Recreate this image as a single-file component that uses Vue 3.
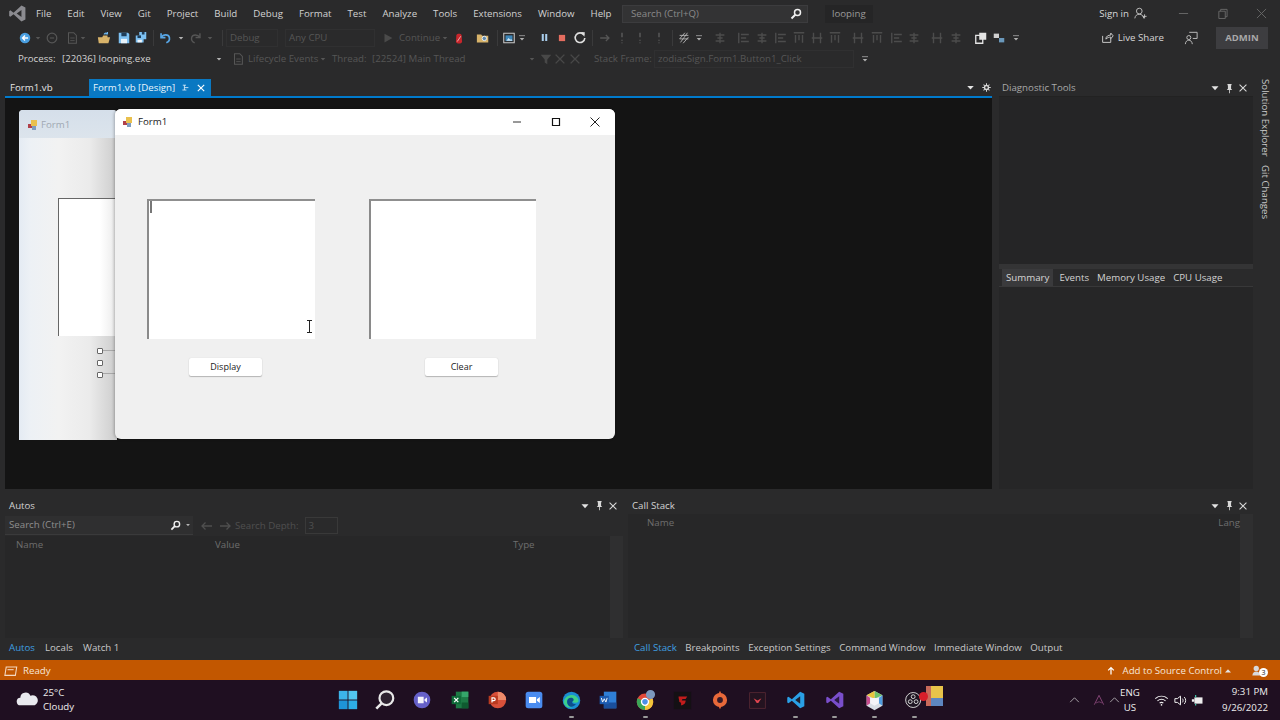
<script setup>
import { h } from 'vue'

const circ = (cx, cy, r) => `M${cx - r} ${cy}a${r} ${r} 0 1 0 ${2 * r} 0a${r} ${r} 0 1 0 ${-2 * r} 0Z`
const DIM = '#565656'

/* every icon: list of [d, fill, stroke, strokeWidth] */
const icons = {
  back: [[circ(8, 8, 6), '#4a9fe0'], ['M11.5 8H5.5M8 5.2L5.2 8 8 10.8', 'none', '#fff', 1.6]],
  fwdDim: [[circ(8, 8, 5.5), 'none', DIM, 1.4], ['M5.5 8h5', 'none', DIM, 1.2]],
  drop: [['M5 6.5h6L8 10z', '#b4b4b4']],
  dropW: [['M4 6h8L8 10.5z', '#e4e4e4']],
  dropDim: [['M5 6.5h6L8 10z', DIM]],
  dropBar: [['M4 4.5h8v1H4z', '#b0b0b0'], ['M5 8h6l-3 3.4z', '#b0b0b0']],
  newDim: [['M4 2h6l3 3v9H4z', 'none', DIM, 1.2], ['M6 8h5M6 11h5', 'none', DIM, 1]],
  open: [['M1 7h5l1-2h5v2h3l-2 7H2z', '#d8b36a'], ['M8 4c1-2 3-2 4-1M12 1v2.5H9.5', 'none', '#6fb7ee', 1.2]],
  save: [['M2 2h10.5L14 3.5V14H2z', '#7cc0f2'], ['M5 2h6v4H5z', '#1f3d59'], ['M4.5 9h7v5h-7z', '#e8f2fa']],
  saveAll: [['M6 1h8v8.5h-3V13H2V5h4z', '#7cc0f2'], ['M4 5h4v3H4z', '#1f3d59'], ['M4 10h5v3H4z', '#f0f6fb'], ['M9 1h3v3H9z', '#1f3d59']],
  undo: [['M3.5 2.5v5h5', 'none', '#58a6e6', 1.9], ['M3.5 7.5C6 3.5 12 3.5 13 7.5c.6 3-1.2 5-3.5 6', 'none', '#58a6e6', 1.9]],
  redoDim: [['M12.5 2.5v5h-5', 'none', DIM, 1.6], ['M12.5 7.5C10 3.5 4 3.5 3 7.5c-.6 3 1.2 5 3.5 6', 'none', DIM, 1.6]],
  playDim: [['M4 3l9 5-9 5z', '#4a4a4a']],
  bug: [['M5 4.5c1-2 5-2 6 0l.5 8c-1 2.5-6 2.5-7 0z', '#c8262c'], ['M6 12l4-6', 'none', '#e8c0c0', 1]],
  folderFind: [['M1 4h5l1 1.5h7V13H1z', '#d8b36a'], [circ(9.5, 8.5, 2.5), '#5f88ad', '#e6eef5', 1.1]],
  frame: [['M2 2.5h12v11H2z', 'none', '#c9c9c9', 1.2], ['M4 5h8v6.5H4z', '#3e86b8'], ['M5 11l2.5-3 2 2 1-1 1.5 2z', '#cfe6f5']],
  pause: [['M4 3h3v10H4zM9 3h3v10H9z', '#a9cdec']],
  stop: [['M3 3h10v10H3z', '#e46d5f']],
  restart: [['M12.5 4.5A5.5 5.5 0 1 0 13.5 8', 'none', '#dedede', 1.8], ['M9 1l4.5 .5-.5 5z', '#dedede']],
  arrowDim: [['M2.5 8h10M9 4.5L12.5 8 9 11.5', 'none', DIM, 1.5]],
  upDim: [['M8 2v5M8 10v1M8 13v1', 'none', DIM, 1.8]],
  hatch: [['M4 13L12 2M3 9l6-7M7 14l6-7M3 5h10M3 9h10', 'none', '#b8b8b8', 1]],
  alignA: [['M2 2v12M4.5 4h9M4.5 8h6M4.5 12h9', 'none', '#4c4c4c', 1.6]],
  alignB: [['M8 2v12M3 4.5h10M5 8h6M3 11.5h10', 'none', '#4c4c4c', 1.6]],
  alignC: [['M2 2h12M4 4.5v9M8 4.5v6M12 4.5v9', 'none', '#4c4c4c', 1.6]],
  alignD: [['M4 2v12M12 2v12M2 8h12', 'none', '#4c4c4c', 1.6]],
  order1: [['M2 5h8v9H2z', 'none', '#e4e4e4', 1.5], ['M6 2h8v8H6z', '#e4e4e4']],
  order2: [['M2 3h6v5H2z', '#cfcfcf'], ['M8 8h6v5H8z', '#6a98bb']],
  share: [['M2 6v8h10V9', 'none', '#c8c8c8', 1.2], ['M6 10c0-3.5 3-5 6-5V2.5L15 6l-3 3.5V7.5c-2 0-4 .5-6 2.5z', 'none', '#c8c8c8', 1.2]],
  feedback: [['M6 1.5h9v7H10', 'none', '#bdbdbd', 1.1], [circ(5.5, 7.5, 2.3), 'none', '#bdbdbd', 1.1], ['M1.5 15c.3-3 2-4.5 4-4.5s3.7 1.5 4 4.5', 'none', '#bdbdbd', 1.1]],
  filterDim: [['M2 3h12L9.5 8.5V14l-3-2V8.5z', '#484848']],
  threadDim: [['M3 3l5 5 5-5M3 13l5-5 5 5', 'none', '#484848', 1.6]],
  search: [[circ(10, 6, 4), 'none', '#f0f0f0', 2], ['M7 9l-5 5', 'none', '#f0f0f0', 2.6]],
  person: [[circ(6.5, 5, 3.5), 'none', '#c8c8c8', 1.1], ['M1 14c.5-3.5 2.5-5 5.5-5s5 1.5 5.5 5', 'none', '#c8c8c8', 1.1], ['M13 9v5M10.5 11.5h5', 'none', '#c8c8c8', 1.1]],
  pin: [['M5 1.5h6V3l-.7.5v5L12 10H4l1.7-1.5v-5L5 3zM7.4 10h1.2v5H7.4z', '#d8d8d8']],
  close: [['M2.5 2.5l11 11M13.5 2.5l-11 11', 'none', '#d8d8d8', 1.7]],
  gear: [[circ(8, 8, 3.5), 'none', '#d8d8d8', 2.4], ['M8 .5v3M8 12.5v3M.5 8h3M12.5 8h3M2.7 2.7l2.2 2.2M11.1 11.1l2.2 2.2M13.3 2.7l-2.2 2.2M4.9 11.1l-2.2 2.2', 'none', '#d8d8d8', 1.8]],
  ready: [['M2.5 3.5h12L13 13H1z', 'none', '#f4d9c2', 1.2], ['M4 6.5h7', 'none', '#f4d9c2', 1.2]],
  up: [['M8 2.5v11M3.5 7L8 2.5 12.5 7', 'none', '#fff', 2]],
  people: [[circ(6, 5, 3), '#d9d9d9'], ['M1.5 13c.3-3 2-4.5 4.5-4.5S10 10 10.5 13z', '#d9d9d9']]
}

/* taskbar icons (24 grid) */
const appIcons = {
  win: [['M2 2h9.5v9.5H2z', '#3cb4ea'], ['M12.5 2H22v9.5h-9.5z', '#52c6f0'], ['M2 12.5h9.5V22H2z', '#1e94d8'], ['M12.5 12.5H22V22h-9.5z', '#2eaee6']],
  find: [[circ(13.5, 10, 7.5), '#2d2230', '#e8e8e8', 2.4], ['M8 16l-5.5 5.5', 'none', '#e8e8e8', 2.8]],
  chat: [[circ(12, 12, 10), '#6560c8'], ['M7 8h7v8H7zM15 11l3-2v6l-3-2z', '#f2f2fb']],
  excel: [['M7 2h15v20H7z', '#1d7a45'], ['M14 2h8v6.5h-8z', '#35a66a'], ['M14 15h8v7h-8z', '#0f5a30'], ['M2 7h11v10H2z', '#0e6b38'], ['M5 9.5l5 5M10 9.5l-5 5', 'none', '#fff', 1.5]],
  ppt: [[circ(13, 12, 10), '#d8503a'], ['M13 2a10 10 0 0 1 10 10H13z', '#ee8a6a'], ['M2 7h11v10H2z', '#b93a20'], ['M6 15V9.5h2.2a1.6 1.6 0 0 1 0 3.3H6', 'none', '#fff', 1.4]],
  zoom: [['M5 2h14a3 3 0 0 1 3 3v14a3 3 0 0 1-3 3H5a3 3 0 0 1-3-3V5a3 3 0 0 1 3-3z', '#4a8cf0'], ['M6 8.5h8.5v7H6zM15.5 11l3.5-2.5v7L15.5 13z', '#fff']],
  edge: [[circ(12, 12, 10), '#1a8ed2'], ['M3 14c1-7 9-10 14-7 3 2 4 6 2 7-2 1-5 1-6-1 2-2 0-4-3-3.5-3 .5-4 4-2 7 1 2 3 3 5 3-5 2-9-1-10-5.5z', '#3cd08a'], ['M7 13c0-3 3-5 6-4 2 1 2 3 0 4-1 2 1 3 4 3-2 3-6 4-8 2-1.5-1.5-2-3-2-5z', '#0c4f8c']],
  word: [['M7 2h15v20H7z', '#2f7fd6'], ['M7 15h15v7H7z', '#1a4f9c'], ['M2 7h11v10H2z', '#1c5bb0'], ['M4 9.5l1.5 5 2-4 2 4 1.5-5', 'none', '#fff', 1.1]],
  chrome: [[circ(12, 14, 9), '#e24a3b'], ['M12 14l8-4a9 9 0 0 1-8 13z', '#f3c53a'], ['M12 14l-8-4a9 9 0 0 0 8 13z', '#3aa757'], [circ(12, 14, 3.8), '#4a90e8', '#fff', 1.5], [circ(18, 6, 5), '#7c98bd']],
  garena: [['M1 1h22v22H1z', '#141014'], ['M7 7h11l-2 3h-4l-1 2h5c0 4-3 6-6 6 1-2 0-4-2-4 0-3-1-4-1-7z', '#c01c1c']],
  origin: [[circ(12, 12, 8.5), '#e8693a'], [circ(12, 12, 3.5), '#351b28'], ['M12 1l2 4h-4zM12 23l-2-4h4z', '#e8693a']],
  valo: [['M2 2h20v20H2z', '#241320', '#5a2a35', 1], ['M7 9l4 6h2l4-6-5 3z', '#e0454f']],
  vscode: [['M17 2l5 2.5v15L17 22 7 13l-4 3-1.5-1V9L3 8l4 3z', '#2aa0e6'], ['M17 7.5L11 12l6 4.5z', '#1f2230']],
  vs: [['M17 2l5 2.5v15L17 22 7 13l-4 3-1.5-1V9L3 8l4 3z', '#7a4ecb'], ['M17 7.5L11 12l6 4.5z', '#2a1a44']],
  gem: [['M12 1l9 5v12l-9 5-9-5V6z', '#d9dfe6'], ['M12 1l9 5-9 4z', '#6fc36a'], ['M12 1L3 6l9 4z', '#e8c53c'], ['M3 6v12l4-3V9z', '#c84d8e'], ['M21 6v12l-4-3V9z', '#4e9ce0'], ['M7 9h10v6l-5 3-5-3z', '#f4f4f8']],
  obs: [[circ(11, 12, 9), '#1e1522', '#e0e0e0', 1.1], [circ(11, 8, 2.3), 'none', '#e0e0e0', 1.1], [circ(7.5, 14, 2.3), 'none', '#e0e0e0', 1.1], [circ(14.5, 14, 2.3), 'none', '#e0e0e0', 1.1]],
  cloud: [['M5 17a4 4 0 0 1-.5-8A5.5 5.5 0 0 1 15 7a4.5 4.5 0 0 1 4.5 10z', '#e9e9ee']],
  wifi: [['M2 9c6-5 14-5 20 0M5.5 12.5c4-3.2 9-3.2 13 0M9 16c2-1.4 4-1.4 6 0', 'none', '#eee', 1.7], [circ(12, 19, 1.3), '#eee']],
  vol: [['M3 9h4l5-4v14l-5-4H3z', 'none', '#eee', 1.6], ['M15 9c1.5 1.5 1.5 4.5 0 6M18 6.5c3 3 3 8 0 11', 'none', '#eee', 1.6]],
  batt: [['M7 7h13v10H7z', '#eee'], ['M3 10h4v4H3z', '#eee'], ['M9 3v4M9 17v3', 'none', '#3fc1a6', 2]],
  caret: [['M4 15l8-8 8 8', 'none', '#d8d8d8', 1.3]],
  caretPink: [['M4 20L12 4l8 16', 'none', '#8e4a7e', 1.5], ['M7 17l5-2 5 2', 'none', '#8e4a7e', 1.2]]
}

const Ico = (props) =>
  h('svg', { viewBox: props.grid === 24 ? '0 0 24 24' : '0 0 16 16', width: props.size || 14, height: props.size || 14, class: 'ico' },
    (props.grid === 24 ? appIcons : icons)[props.name].map((p) =>
      h('path', { d: p[0], fill: p[1], stroke: p[2] || 'none', 'stroke-width': p[3] || 0 })))
Ico.props = ['name', 'size', 'grid']

/* toolbar rows: x = left edge in the row, w = width; flow gaps are computed from them */
const flow = (list) => {
  let right = 0
  return list.map((it) => {
    const gap = it.x - right
    right = it.x + it.w
    return { ...it, gap }
  })
}
const ic = (cx, i, size = 14) => ({ x: cx - 8, w: 16, i, size })
const drop = (cx, i = 'drop') => ({ x: cx - 5, w: 10, i, size: 12 })

const row1 = flow([
  ic(25, 'back'), drop(38, 'dropDim'), ic(52, 'fwdDim'), ic(72, 'newDim'), drop(83, 'dropDim'),
  ic(104, 'open'), ic(124, 'save'), ic(141, 'saveAll'),
  { x: 153, w: 1, sep: 1 },
  ic(165, 'undo'), drop(181), ic(196, 'redoDim'), drop(210, 'dropDim'),
  { x: 222, w: 1, sep: 1 },
  { x: 226, w: 52, t: 'Debug', cls: 'combo dim' },
  { x: 285, w: 90, t: 'Any CPU', cls: 'combo dim' },
  ic(388, 'playDim'), { x: 399, w: 42, t: 'Continue', cls: 'dim' }, drop(445, 'dropDim'),
  ic(459, 'bug'), ic(483, 'folderFind'),
  { x: 497, w: 1, sep: 1 },
  ic(509, 'frame'), drop(522, 'dropBar'), ic(544, 'pause', 11), ic(562, 'stop', 10), ic(580, 'restart'),
  { x: 592, w: 1, sep: 1 },
  ic(605, 'arrowDim'), ic(622, 'upDim'), ic(640, 'upDim'), ic(659, 'upDim'),
  { x: 672, w: 1, sep: 1 },
  ic(684, 'hatch'), drop(699, 'dropBar'), ic(720, 'alignB'),
  ic(744, 'alignA'), ic(762, 'alignB'), ic(781, 'alignA'), ic(799, 'alignC'), ic(817, 'alignD'), ic(835, 'alignC'),
  ic(858, 'alignD'), ic(877, 'alignC'), ic(897, 'alignA'), ic(914, 'alignB'), ic(937, 'alignD'), ic(956, 'alignB'),
  ic(981, 'order1'), ic(999, 'order2'), drop(1016, 'dropBar')
])

const row2 = flow([
  { x: 18, w: 42, t: 'Process:' },
  { x: 62, w: 100, t: '[22036] looping.exe' },
  drop(219), ic(238, 'newDim'),
  { x: 248, w: 70, t: 'Lifecycle Events', cls: 'dim' }, drop(323, 'dropDim'),
  { x: 332, w: 36, t: 'Thread:', cls: 'dim' },
  { x: 372, w: 150, t: '[22524] Main Thread', cls: 'dim' },
  drop(532, 'dropDim'), ic(546, 'filterDim'), ic(560, 'threadDim'), ic(575, 'threadDim'),
  { x: 594, w: 56, t: 'Stack Frame:', cls: 'dim' },
  { x: 654, w: 200, t: 'zodiacSign.Form1.Button1_Click', cls: 'combo dim' },
  drop(865, 'dropBar')
])

const menu = ['File', 'Edit', 'View', 'Git', 'Project', 'Build', 'Debug', 'Format', 'Test', 'Analyze', 'Tools', 'Extensions', 'Window', 'Help']
const diagTabs = ['Events', 'Memory Usage', 'CPU Usage']
const leftTabs = ['Locals', 'Watch 1']
const rightTabs = ['Breakpoints', 'Exception Settings', 'Command Window', 'Immediate Window', 'Output']
const apps = [
  { n: 'win', s: 22 }, { n: 'find', s: 22 }, { n: 'chat', s: 20 }, { n: 'excel', s: 20 }, { n: 'ppt', s: 20 },
  { n: 'zoom', s: 20 }, { n: 'edge', s: 21, on: 1 }, { n: 'word', s: 20 }, { n: 'chrome', s: 22, on: 1 },
  { n: 'garena', s: 19 }, { n: 'origin', s: 20 }, { n: 'valo', s: 19 }, { n: 'vscode', s: 20, on: 1, ml: 1.5 },
  { n: 'vs', s: 20, on: 1, ml: 2 }, { n: 'gem', s: 21, on: 1, ml: 2 }, { n: 'obs', s: 20, on: 1, ml: 3 }
]
</script>

<template>
  <div class="app">
    <header class="titlebar">
      <svg class="logo" viewBox="0 0 24 24" width="19" height="19">
        <path d="M17 2l5 2.5v15L17 22 7 13l-4 3-1.5-1V9L3 8l4 3z" fill="#8b8b90" />
        <path d="M17 7.5L11 12l6 4.5z" fill="#2b2b2c" />
      </svg>
      <nav class="menu"><span v-for="m in menu" :key="m">{{ m }}</span></nav>
      <div class="searchbox"><span>Search (Ctrl+Q)</span><Ico name="search" :size="12" /></div>
      <div class="solution">looping</div>
      <div class="spacer"></div>
      <span class="signin">Sign in</span>
      <Ico name="person" :size="13" class="person" />
      <div class="winctl">
        <svg viewBox="0 0 12 12" width="11" height="11"><path d="M1 6h10" stroke="#6a6a6a" /></svg>
        <svg viewBox="0 0 12 12" width="11" height="11"><path d="M2 3.5h7v8H2zM4 3.5V1.5h7v8H9" fill="none" stroke="#6a6a6a" /></svg>
        <svg viewBox="0 0 12 12" width="11" height="11"><path d="M1 1l10 10M11 1L1 11" stroke="#6a6a6a" /></svg>
      </div>
    </header>

    <div class="toolbar one">
      <template v-for="(it, n) in row1" :key="n">
        <span v-if="it.sep" class="sep" :style="{ marginLeft: it.gap + 'px' }"></span>
        <span v-else-if="it.t" class="tool-text" :class="it.cls" :style="{ marginLeft: it.gap + 'px', width: it.w + 'px' }">{{ it.t }}</span>
        <span v-else class="tool" :style="{ marginLeft: it.gap + 'px', width: it.w + 'px' }"><Ico :name="it.i" :size="it.size" /></span>
      </template>
      <div class="spacer"></div>
      <div class="liveshare"><Ico name="share" :size="13" /><span>Live Share</span></div>
      <Ico name="feedback" :size="14" class="feedback" />
      <div class="admin">ADMIN</div>
    </div>

    <div class="toolbar two">
      <template v-for="(it, n) in row2" :key="n">
        <span v-if="it.t" class="tool-text" :class="it.cls" :style="{ marginLeft: it.gap + 'px', width: it.w + 'px' }">{{ it.t }}</span>
        <span v-else class="tool" :style="{ marginLeft: it.gap + 'px', width: it.w + 'px' }"><Ico :name="it.i" :size="it.size" /></span>
      </template>
    </div>

    <div class="middle">
      <div class="work">
        <div class="upper">
          <section class="doc">
            <div class="doctabs">
              <span class="doctab">Form1.vb</span>
              <span class="doctab active"><span class="tabname">Form1.vb [Design]</span>
                <svg viewBox="0 0 10 10" width="8" height="8" class="tabpin"><path d="M3 1.5v6M3 4.5h5M1 1.5h4M.5 7.5h5" stroke="#e8f4fc" fill="none" /></svg>
                <svg viewBox="0 0 10 10" width="8" height="8" class="tabclose"><path d="M1 1l8 8M9 1L1 9" stroke="#fff" stroke-width="1.4" /></svg>
              </span>
              <div class="spacer"></div>
              <Ico name="dropW" :size="13" />
              <Ico name="gear" :size="9" class="docgear" />
            </div>
            <div class="canvas">
              <div class="backform">
                <div class="backtitle">
                  <svg class="formicon" viewBox="0 0 12 12" width="12" height="12"><path d="M1 5h4v4H1z" fill="#b0404a" /><path d="M4 1h6v6H4z" fill="#e9c04e" /><path d="M5 7h4v4H5z" fill="#7d9cc0" /></svg>
                  <span>Form1</span>
                </div>
                <div class="backbox"></div>
                <div class="backbtn"></div>
                <div class="handles"><i></i><i></i><i></i></div>
              </div>
              <div class="window">
                <div class="wintitle">
                  <svg class="formicon" viewBox="0 0 12 12" width="12" height="12"><path d="M1 5h4v4H1z" fill="#b0404a" /><path d="M4 1h6v6H4z" fill="#e9c04e" /><path d="M5 7h4v4H5z" fill="#7d9cc0" /></svg>
                  <span class="wintext">Form1</span>
                  <div class="spacer"></div>
                  <svg class="wbtn" viewBox="0 0 10 10" width="10" height="10"><path d="M1 5h8" stroke="#333" /></svg>
                  <svg class="wbtn" viewBox="0 0 10 10" width="10" height="10"><path d="M1.5 1.5h7v7h-7z" fill="none" stroke="#111" stroke-width="1.2" /></svg>
                  <svg class="wbtn" viewBox="0 0 10 10" width="10" height="10"><path d="M.5 .5l9 9M9.5 .5l-9 9" stroke="#222" /></svg>
                </div>
                <div class="winbody">
                  <div class="boxes">
                    <div class="tbox first"><i class="caret"></i><svg class="ibeam" viewBox="0 0 7 13" width="7" height="13"><path d="M1 .5h5M1 12.5h5M3.5 .5v12" stroke="#222" fill="none" /></svg></div>
                    <div class="tbox"></div>
                  </div>
                  <div class="btns">
                    <button class="wbutton">Display</button>
                    <button class="wbutton">Clear</button>
                  </div>
                </div>
              </div>
            </div>
          </section>

          <section class="diag">
            <div class="panelhead"><span>Diagnostic Tools</span><div class="spacer"></div><Ico name="dropW" :size="14" class="hdrop" /><Ico name="pin" :size="11" /><Ico name="close" :size="10" /></div>
            <div class="diagtop"></div>
            <div class="splitter"></div>
            <div class="diagtabs"><span class="on">Summary</span><span v-for="t in diagTabs" :key="t">{{ t }}</span></div>
            <div class="diagbottom"></div>
          </section>
        </div>

        <div class="lower">
          <section class="pane autos">
            <div class="panelhead"><span>Autos</span><div class="spacer"></div><Ico name="dropW" :size="14" class="hdrop" /><Ico name="pin" :size="11" /><Ico name="close" :size="10" /></div>
            <div class="searchrow">
              <div class="panesearch"><span>Search (Ctrl+E)</span><div class="spacer"></div><Ico name="search" :size="11" /><Ico name="drop" :size="10" /></div>
              <svg viewBox="0 0 32 10" width="32" height="10" class="depthnav"><path d="M12 5H2M5.5 1.5L2 5l3.5 3.5M20 5h10M26.5 1.5L30 5l-3.5 3.5" fill="none" stroke="#4f4f4f" stroke-width="1.3" /></svg>
              <span class="depth">Search Depth:</span>
              <span class="depthbox">3</span>
            </div>
            <div class="paneframe">
              <div class="cols"><span class="cname">Name</span><span class="cvalue">Value</span><span class="ctype">Type</span></div>
              <div class="scroll"></div>
            </div>
            <div class="panetabs"><span class="on">Autos</span><span v-for="t in leftTabs" :key="t">{{ t }}</span></div>
          </section>
          <section class="pane stack">
            <div class="panelhead"><span>Call Stack</span><div class="spacer"></div><Ico name="dropW" :size="14" class="hdrop" /><Ico name="pin" :size="11" /><Ico name="close" :size="10" /></div>
            <div class="paneframe stackframe">
              <div class="cols"><span class="sname">Name</span><span class="slang">Lang</span></div>
              <div class="scroll"></div>
            </div>
            <div class="panetabs stacktabs"><span class="on">Call Stack</span><span v-for="t in rightTabs" :key="t">{{ t }}</span></div>
          </section>
        </div>
      </div>
      <aside class="strip"><span>Solution Explorer</span><span>Git Changes</span></aside>
    </div>

    <footer class="status">
      <Ico name="ready" :size="14" />
      <span class="readytext">Ready</span>
      <div class="spacer"></div>
      <Ico name="up" :size="10" />
      <span class="addsource">Add to Source Control</span>
      <Ico name="dropW" :size="12" class="srcdrop" />
      <span class="badgewrap"><Ico name="people" :size="14" /><b class="badge">3</b></span>
    </footer>

    <div class="taskbar">
      <div class="weather">
        <Ico name="cloud" :grid="24" :size="23" />
        <div class="wtext"><span>25°C</span><span>Cloudy</span></div>
      </div>
      <div class="apps">
        <span v-for="a in apps" :key="a.n" class="app-ico" :class="{ running: a.on }" :style="a.ml ? { marginLeft: a.ml + 'px' } : null">
          <Ico :name="a.n" :grid="24" :size="a.s" />
          <template v-if="a.n === 'obs'"><i class="obsthumb"></i><i class="obsdot"></i></template>
        </span>
      </div>
      <div class="tray">
        <Ico name="caret" :grid="24" :size="13" />
        <Ico name="caretPink" :grid="24" :size="14" class="pink" />
        <Ico name="caret" :grid="24" :size="13" class="caret2" />
        <div class="lang"><span>ENG</span><span>US</span></div>
        <Ico name="wifi" :grid="24" :size="15" class="wifi" />
        <Ico name="vol" :grid="24" :size="15" />
        <Ico name="batt" :grid="24" :size="15" class="batt" />
        <div class="clock"><span>9:31 PM</span><span>9/26/2022</span></div>
      </div>
    </div>
  </div>
</template>

<style>
html, body { margin: 0; background: #2a2a2b; }
</style>

<style scoped>
.app {
  width: 1280px; height: 720px; overflow: hidden;
  display: flex; flex-direction: column;
  background: #2a2a2b; color: #d2d2d2;
  font: 9.7px/1.2 "Open Sans", "Noto Sans", sans-serif;
}
.spacer { flex: 1; }
.ico { display: block; flex: none; }

.titlebar { height: 26px; flex: none; display: flex; align-items: center; padding-top: 1px; box-sizing: border-box; }
.logo { margin-left: 8px; }
.menu { display: flex; gap: 16px; margin-left: 9px; width: 591px; flex: none; }
.searchbox {
  width: 186px; height: 18px; margin-left: -5px; box-sizing: border-box; padding: 0 5px 0 8px;
  display: flex; align-items: center; justify-content: space-between;
  background: #333334; border: 1px solid #3c3c3e; color: #8a8a8a;
}
.solution { margin-left: 17px; width: 48px; height: 18px; box-sizing: border-box; padding-left: 7px; line-height: 18px; background: #252526; color: #9a9a9a; }
.signin { color: #d8d8d8; }
.person { margin: 0 31px 0 5px; }
.winctl { display: flex; gap: 28px; margin-right: 13px; }

.toolbar { flex: none; display: flex; align-items: center; }
.toolbar.one { height: 23px; }
.toolbar.two { height: 19px; }
.tool { display: flex; justify-content: center; align-items: center; flex: none; }
.tool-text { flex: none; white-space: nowrap; }
.sep { width: 1px; height: 16px; background: #3a3a3b; flex: none; }
.dim { color: #565656; }
.combo { box-sizing: border-box; height: 18px; line-height: 16px; padding-left: 3px; border: 1px solid #303031; overflow: hidden; }
.liveshare { display: flex; align-items: center; gap: 4px; color: #d6d6d6; }
.feedback { margin-left: 20px; }
.admin {
  margin: 0 12px 0 18px; width: 52px; height: 22px; line-height: 22px; text-align: center;
  background: #3d3d40; color: #a8a8a8; font-weight: 700; font-size: 9.5px;
}

.middle { flex: 1; min-height: 0; display: flex; }
.work { flex: 1; min-width: 0; padding: 11px 2px 4px 5px; display: flex; flex-direction: column; }
.upper { height: 410px; flex: none; display: flex; gap: 7px; }
.doc { width: 987px; flex: none; display: flex; flex-direction: column; }
.doctabs { height: 17px; flex: none; display: flex; align-items: center; border-bottom: 2px solid #007acc; }
.doctab { padding: 0 6px 0 5px; color: #e4e4e4; line-height: 17px; height: 17px; width: 84px; box-sizing: border-box; }
.doctab.active { width: 122px; background: #0a78c2; color: #e9f5fd; padding-left: 4px; display: flex; align-items: center; white-space: nowrap; }
.tabname { width: 89px; flex: none; }
.tabpin { flex: none; }
.tabclose { flex: none; margin-left: 7px; }
.docgear { margin: 0 1px 0 5px; }
.canvas { flex: 1; position: relative; background: #141414; overflow: hidden; }

.backform {
  position: absolute; left: 14px; top: 12px; width: 98px; height: 330px; border-radius: 4px 4px 0 0;
  background: linear-gradient(90deg, #e4ebf3 0, #edf1f5 12%, #f2f2f2 40%, #ebebeb 72%, #cccccc 100%);
}
.backtitle {
  height: 28px; display: flex; align-items: center; padding: 1px 0 0 8px; box-sizing: border-box; gap: 2px; color: #a0a8b2; border-radius: 4px 4px 0 0;
  background: linear-gradient(180deg, #d5dfea, #dce4ec);
}
.backbox { position: absolute; left: 39px; top: 88px; width: 59px; height: 137px; background: linear-gradient(90deg, #fff 70%, #e8e8e8); border-left: 1px solid #666; border-top: 1px solid #666; }
.backbtn { position: absolute; left: 82px; top: 240px; width: 16px; height: 22px; border-top: 1px solid #a8a8a8; border-bottom: 1px solid #a8a8a8; }
.handles { position: absolute; left: 78px; top: 238px; display: flex; flex-direction: column; gap: 6.5px; }
.handles i { display: block; width: 3.5px; height: 3.5px; border: 1px solid #666; background: #fff; border-radius: 1px; }

.window {
  position: absolute; left: 110px; top: 11px; width: 500px; height: 330px; border-radius: 6px; overflow: hidden;
  background: #f0f0f0; box-shadow: -1px 0 3px rgba(0, 0, 0, .25);
  display: flex; flex-direction: column;
}
.wintitle { height: 26px; flex: none; background: #fff; display: flex; align-items: center; padding-left: 7px; color: #1a1a1a; }
.wintext { margin-left: 4px; }
.wbtn { margin-right: 29px; }
.wbtn:last-child { margin-right: 15px; }
.winbody { flex: 1; padding: 64px 0 0 32px; }
.boxes { display: flex; gap: 54px; }
.tbox {
  width: 167px; height: 140px; box-sizing: border-box; position: relative;
  background: #fff; border-left: 2px solid #8a8a8a; border-top: 2px solid #8f8f8f;
}
.tbox.first { width: 168px; }
.caret { position: absolute; left: 1px; top: 0; width: 2px; height: 12px; background: #777; }
.ibeam { position: absolute; left: 157px; top: 119px; }
.btns { display: flex; margin: 19px 0 0 42px; gap: 163px; }
.wbutton {
  width: 73px; height: 18px; padding: 0; background: #fff; color: #222;
  border: 0; border-radius: 2px; box-shadow: 0 1px 1px #b5b5b5, 0 0 1px #c8c8c8;
  font: inherit; font-size: 9px;
}

.panelhead { height: 17px; flex: none; display: flex; align-items: center; gap: 3.5px; padding: 1px 5px 0 3px; box-sizing: border-box; }
.hdrop { margin-right: -2px; }
.diag { width: 254px; flex: none; display: flex; flex-direction: column; }
.diag .panelhead { color: #a8a8a8; }
.diagtop { height: 168px; flex: none; background: #252526; border-top: 1px solid #222; box-sizing: border-box; }
.splitter { height: 5px; flex: none; background: #343435; }
.diagtabs { height: 18px; flex: none; display: flex; gap: 8px; align-items: center; padding-left: 3px; border-bottom: 1px solid #383839; box-sizing: border-box; }
.diagtabs span { line-height: 17px; }
.diagtabs .on { background: #3a3a3c; padding: 0 4px; color: #d6d6d6; margin-right: -2px; }
.diagbottom { flex: 1; background: #262627; }

.lower { height: 160px; flex: none; margin-top: 8px; display: flex; gap: 5px; }
.pane { display: flex; flex-direction: column; }
.pane .panelhead { padding: 0 5px 0 4px; }
.autos { width: 618px; flex: none; }
.stack { flex: 1; }
.searchrow { height: 19px; flex: none; margin-top: 2px; display: flex; align-items: center; color: #4f4f4f; }
.panesearch { width: 188px; height: 19px; box-sizing: border-box; padding: 0 0 0 4px; background: #2f2f30; display: flex; align-items: center; color: #8e8e8e; gap: 2px; border-bottom: 1px solid #3a3a3b; }
.depthnav { margin-left: 7px; }
.depth { margin-left: 3px; white-space: nowrap; }
.depthbox { margin-left: 6px; width: 33px; height: 17px; box-sizing: border-box; line-height: 15px; padding-left: 3px; border: 1px solid #393939; }
.paneframe { flex: 1; min-height: 0; margin-top: 1px; position: relative; display: flex; background: #272728; }
.stackframe { margin-top: 0; }
.cols { flex: 1; height: 18px; position: relative; display: flex; align-items: center; color: #6e6e6e; }
.cname { margin-left: 11px; width: 199px; }
.cvalue { width: 298px; }
.sname { margin-left: 19px; flex: 1; }
.slang { margin-right: 0; }
.scroll { width: 13px; background: #2f2f30; }
.panetabs { height: 18px; flex: none; display: flex; gap: 10px; align-items: center; padding-left: 4px; color: #c8c8c8; margin-top: 1px; }
.stacktabs { gap: 8.5px; padding-left: 6px; }
.panetabs .on { color: #3f9fe0; }

.strip { width: 25px; flex: none; display: flex; gap: 8px; padding: 11px 4px 0 0; box-sizing: border-box; writing-mode: vertical-rl; color: #c4c4c4; align-items: center; }

.status { height: 20px; flex: none; background: #c25700; display: flex; align-items: center; padding: 1px 13px 0 4px; box-sizing: border-box; color: #f6e6d8; }
.readytext { margin-left: 5px; }
.addsource { margin: 0 0 0 7px; }
.srcdrop { transform: rotate(180deg); }
.badgewrap { position: relative; margin-left: 17px; width: 16px; }
.badge { position: absolute; left: 8px; top: 4px; width: 9px; height: 9px; line-height: 9px; border-radius: 50%; background: #fff; color: #222; text-align: center; font-size: 7px; font-weight: 400; }

.taskbar { height: 40px; flex: none; background: #1f0f21; display: flex; align-items: center; color: #eee; }
.weather { width: 329.4px; flex: none; display: flex; align-items: center; gap: 4px; padding-left: 16px; box-sizing: border-box; }
.wtext { display: flex; flex-direction: column; line-height: 14px; }
.apps { display: flex; width: 594px; flex: none; }
.app-ico { width: 37.2px; height: 40px; display: flex; align-items: center; justify-content: center; flex: none; position: relative; }
.app-ico.running::after { content: ""; position: absolute; bottom: 2px; left: 16px; width: 5px; height: 2px; background: #9a9a9a; border-radius: 1px; }
.obsthumb {
  position: absolute; left: 30px; top: 6px; width: 17px; height: 20px;
  background: linear-gradient(90deg, #c86a5a 0 30%, transparent 30%), linear-gradient(180deg, #e8c34a 0 60%, #5d86c0 60%);
}
.obsdot { position: absolute; left: 23px; top: 12px; width: 9px; height: 9px; border-radius: 50%; background: #d81e2a; }
.tray { flex: 1; display: flex; align-items: center; padding-left: 146px; padding-right: 12px; box-sizing: border-box; margin-left: -1px; }
.pink { margin-left: 11px; }
.caret2 { margin-left: 2px; }
.lang { display: flex; flex-direction: column; align-items: center; width: 26px; margin-left: -4.5px; line-height: 15px; }
.wifi { margin-left: 11.5px; margin-right: 4px; }
.batt { margin-left: 2px; }
.clock { margin-left: auto; display: flex; flex-direction: column; align-items: flex-end; line-height: 16px; }
</style>
